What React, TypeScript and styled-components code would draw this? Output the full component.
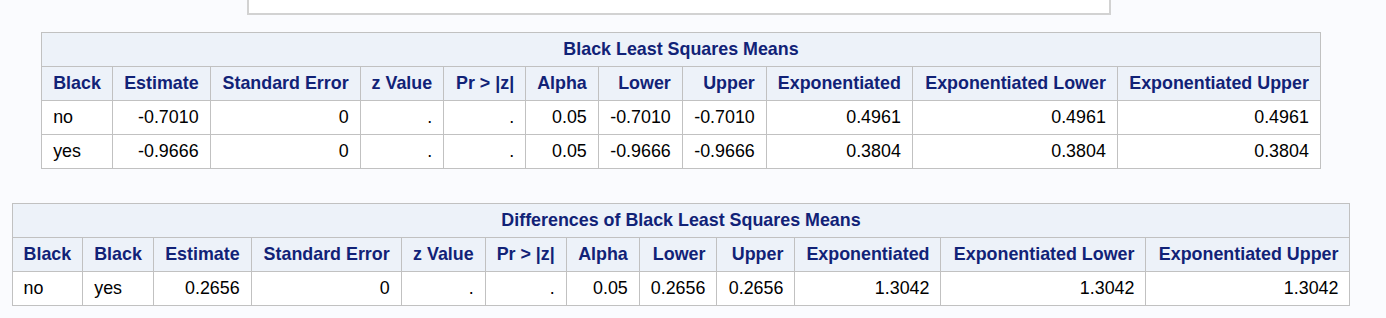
import styled, { createGlobalStyle } from "styled-components";

const GlobalStyle = createGlobalStyle`
    body {
        margin: 0;
        background-color: #fafbfe;
        font-family: "Liberation Sans", Arial, sans-serif;
    }
`

const Page = styled.div`
    width: 1362px;
    display: flex;
    flex-direction: column;
    align-items: center;
`

const PrevOutput = styled.div`
    width: 860px;
    height: 13px;
    background-color: #ffffff;
    border: 2px solid #d2d2d2;
    border-top: none;
    margin-bottom: 17px;
    margin-right: 4px;
`

const Table = styled.table<{ gap?: number }>`
    border-collapse: collapse;
    border: 1px solid #c1c1c1;
    font-size: 17.875px;
    line-height: 21px;
    margin-bottom: ${(props) => props.gap ?? 0}px;
`

const Title = styled.th`
    background-color: #edf2f9;
    color: #112277;
    font-weight: bold;
    text-align: center;
    padding: 6px 11px;
    border: 1px solid #c1c1c1;
`

// w = distance from border to border, as measured on the SAS output
const Head = styled.th<{ align?: string, w: number }>`
    background-color: #edf2f9;
    color: #112277;
    font-weight: bold;
    text-align: ${(props) => props.align ?? "right"};
    padding: 6px 11px;
    border: 1px solid #c1c1c1;
    white-space: nowrap;
    width: ${(props) => props.w - 23}px;
`

const Cell = styled.td<{ align?: string }>`
    background-color: #ffffff;
    color: #000000;
    text-align: ${(props) => props.align ?? "right"};
    padding: 6px 11px;
    border: 1px solid #c1c1c1;
    white-space: nowrap;
`

interface LsmRow {
    black: string,
    values: string[],
}

const statHeads = ["Estimate", "Standard Error", "z Value", "Pr > |z|", "Alpha", "Lower", "Upper", "Exponentiated", "Exponentiated Lower", "Exponentiated Upper"]

const meanWidths = [71, 97, 150, 83, 82, 72, 84, 84, 146, 205, 203]
const diffWidths = [70, 71, 97, 150, 84, 81, 73, 77, 78, 146, 205, 204]

const means: LsmRow[] = [
    { black: "no", values: ["-0.7010", "0", ".", ".", "0.05", "-0.7010", "-0.7010", "0.4961", "0.4961", "0.4961"] },
    { black: "yes", values: ["-0.9666", "0", ".", ".", "0.05", "-0.9666", "-0.9666", "0.3804", "0.3804", "0.3804"] },
]

const diffs = [
    { black: "no", other: "yes", values: ["0.2656", "0", ".", ".", "0.05", "0.2656", "0.2656", "1.3042", "1.3042", "1.3042"] },
]

function App() {
    return (
        <Page>
            <GlobalStyle />
            <PrevOutput />
            <Table gap={34}>
                <thead>
                    <tr>
                        <Title colSpan={11}>Black Least Squares Means</Title>
                    </tr>
                    <tr>
                        <Head align="left" w={meanWidths[0]}>Black</Head>
                        {statHeads.map((h, i) => (
                            <Head key={h} w={meanWidths[i + 1]}>{h}</Head>
                        ))}
                    </tr>
                </thead>
                <tbody>
                    {means.map((row) => (
                        <tr key={row.black}>
                            <Cell align="left">{row.black}</Cell>
                            {row.values.map((v, i) => (
                                <Cell key={i}>{v}</Cell>
                            ))}
                        </tr>
                    ))}
                </tbody>
            </Table>
            <Table>
                <thead>
                    <tr>
                        <Title colSpan={12}>Differences of Black Least Squares Means</Title>
                    </tr>
                    <tr>
                        <Head align="left" w={diffWidths[0]}>Black</Head>
                        <Head align="left" w={diffWidths[1]}>Black</Head>
                        {statHeads.map((h, i) => (
                            <Head key={h} w={diffWidths[i + 2]}>{h}</Head>
                        ))}
                    </tr>
                </thead>
                <tbody>
                    {diffs.map((row) => (
                        <tr key={row.black}>
                            <Cell align="left">{row.black}</Cell>
                            <Cell align="left">{row.other}</Cell>
                            {row.values.map((v, i) => (
                                <Cell key={i}>{v}</Cell>
                            ))}
                        </tr>
                    ))}
                </tbody>
            </Table>
        </Page>
    )
}
export default App;
